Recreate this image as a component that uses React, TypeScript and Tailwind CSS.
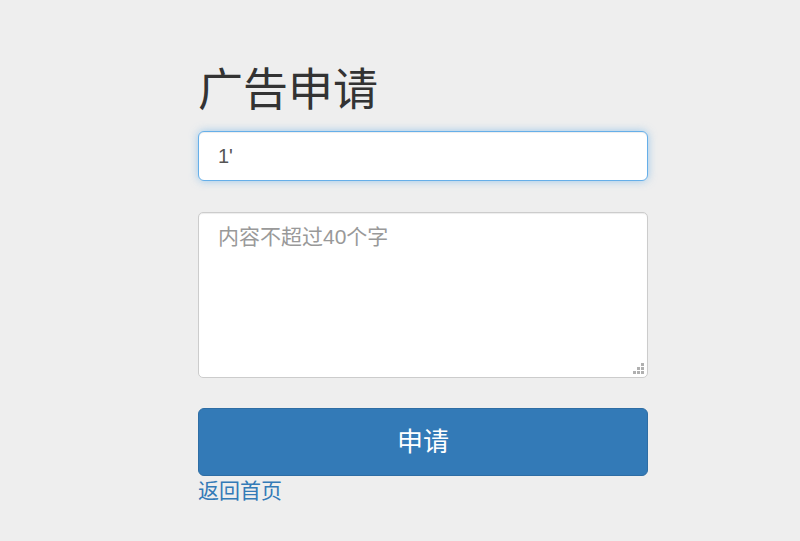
import React from "react";

export default function App() {
  const font = { fontFamily: '"Liberation Sans", "Noto Sans CJK SC", sans-serif' };
  return (
    <div className="min-h-[541px] w-full bg-[#eeeeee]" style={font}>
      <div className="ml-[198px] w-[450px] pt-[66px] flex flex-col">
        <h1 className="text-[45px] leading-[50px] font-normal text-[#333333] m-0">广告申请</h1>
        <input
          className="mt-[15px] h-[50px] w-full rounded-[6px] border border-[#66afe9] bg-white px-[19px] text-[20px] text-[#555555] outline-none shadow-[inset_0_1px_1px_rgba(0,0,0,0.075),0_0_8px_rgba(102,175,233,0.6)]"
          defaultValue="1'"
          style={font}
        />
        <div className="relative mt-[31px] h-[166px] w-full">
          <textarea
            className="block h-full w-full resize-none rounded-[5px] border border-[#cccccc] bg-white px-[19px] py-[10px] text-[21px] leading-[28px] text-[#555555] outline-none shadow-[inset_0_1px_1px_rgba(0,0,0,0.075)] placeholder:text-[#999999]"
            placeholder="内容不超过40个字"
            style={font}
          />
          <div className="absolute right-[4px] bottom-[4px] grid grid-cols-3 grid-rows-3 gap-[1px]">
            <span className="h-[3px] w-[3px]" />
            <span className="h-[3px] w-[3px]" />
            <span className="h-[3px] w-[3px] bg-[#b0b0b0]" />
            <span className="h-[3px] w-[3px]" />
            <span className="h-[3px] w-[3px] bg-[#b0b0b0]" />
            <span className="h-[3px] w-[3px] bg-[#b0b0b0]" />
            <span className="h-[3px] w-[3px] bg-[#b0b0b0]" />
            <span className="h-[3px] w-[3px] bg-[#b0b0b0]" />
            <span className="h-[3px] w-[3px] bg-[#b0b0b0]" />
          </div>
        </div>
        <button
          className="mt-[30px] h-[68px] w-full rounded-[6px] border border-[#2e6da4] bg-[#337ab7] text-[26px] text-white"
          style={font}
        >
          申请
        </button>
        <a className="self-start text-[21px] leading-[30px] text-[#337ab7] no-underline" href="#">
          返回首页
        </a>
      </div>
    </div>
  );
}
